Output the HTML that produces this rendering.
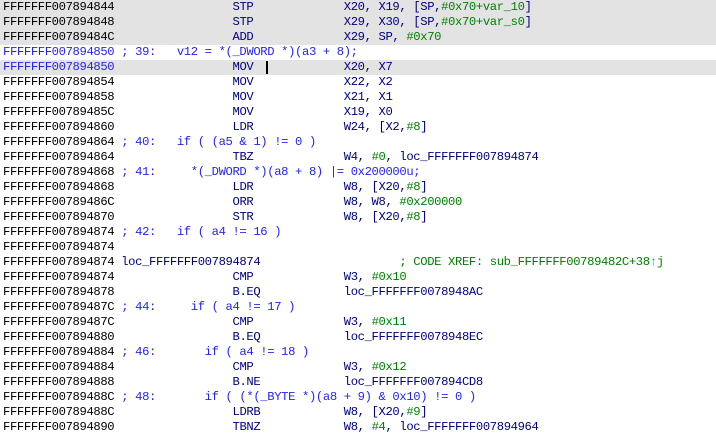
<!DOCTYPE html>
<html><head><meta charset="utf-8"><style>
html,body{margin:0;padding:0;background:#fff;width:716px;height:433px;overflow:hidden}
.v{position:relative;font-family:"Liberation Mono",monospace;font-size:12.2px;letter-spacing:-0.36px;color:#000}
.r{height:15px;line-height:15px;white-space:pre;padding-left:3px;position:relative}
.g{background:#e3e3e3}
.b{color:#2424f0}
.m{color:#000080}
.n{color:#008000}
.c{color:#008000}
.k{color:#1aa0c8}
.cur{position:absolute;left:266px;top:1px;width:2px;height:13px;background:#000}
</style></head><body><div class="v">
<div class="r g">FFFFFFF007894844                 <span class="m">STP             X20, X19, [SP,<span class="n">#0x70+var_10</span>]</span></div>
<div class="r g">FFFFFFF007894848                 <span class="m">STP             X29, X30, [SP,<span class="n">#0x70+var_s0</span>]</span></div>
<div class="r g">FFFFFFF00789484C                 <span class="m">ADD             X29, SP, <span class="n">#0x70</span></span></div>
<div class="r b">FFFFFFF007894850 ; 39:   v12 = *(_DWORD *)(a3 + 8);</div>
<div class="r g"><span class="b">FFFFFFF007894850</span>                 <span class="m">MOV             X20, X7</span><div class="cur"></div></div>
<div class="r">FFFFFFF007894854                 <span class="m">MOV             X22, X2</span></div>
<div class="r">FFFFFFF007894858                 <span class="m">MOV             X21, X1</span></div>
<div class="r">FFFFFFF00789485C                 <span class="m">MOV             X19, X0</span></div>
<div class="r">FFFFFFF007894860                 <span class="m">LDR             W24, [X2,<span class="n">#8</span>]</span></div>
<div class="r">FFFFFFF007894864 <span class="b">; 40:   if ( (a5 &amp; 1) != 0 )</span></div>
<div class="r">FFFFFFF007894864                 <span class="m">TBZ             W4, <span class="n">#0</span>, loc_FFFFFFF007894874</span></div>
<div class="r">FFFFFFF007894868 <span class="b">; 41:     *(_DWORD *)(a8 + 8) |= 0x200000u;</span></div>
<div class="r">FFFFFFF007894868                 <span class="m">LDR             W8, [X20,<span class="n">#8</span>]</span></div>
<div class="r">FFFFFFF00789486C                 <span class="m">ORR             W8, W8, <span class="n">#0x200000</span></span></div>
<div class="r">FFFFFFF007894870                 <span class="m">STR             W8, [X20,<span class="n">#8</span>]</span></div>
<div class="r">FFFFFFF007894874 <span class="b">; 42:   if ( a4 != 16 )</span></div>
<div class="r">FFFFFFF007894874</div>
<div class="r">FFFFFFF007894874 <span class="m">loc_FFFFFFF007894874</span>                    <span class="c">; CODE XREF: sub_FFFFFFF00789482C+38<span class="k">↑</span>j</span></div>
<div class="r">FFFFFFF007894874                 <span class="m">CMP             W3, <span class="n">#0x10</span></span></div>
<div class="r">FFFFFFF007894878                 <span class="m">B.EQ            loc_FFFFFFF0078948AC</span></div>
<div class="r">FFFFFFF00789487C <span class="b">; 44:     if ( a4 != 17 )</span></div>
<div class="r">FFFFFFF00789487C                 <span class="m">CMP             W3, <span class="n">#0x11</span></span></div>
<div class="r">FFFFFFF007894880                 <span class="m">B.EQ            loc_FFFFFFF0078948EC</span></div>
<div class="r">FFFFFFF007894884 <span class="b">; 46:       if ( a4 != 18 )</span></div>
<div class="r">FFFFFFF007894884                 <span class="m">CMP             W3, <span class="n">#0x12</span></span></div>
<div class="r">FFFFFFF007894888                 <span class="m">B.NE            loc_FFFFFFF007894CD8</span></div>
<div class="r">FFFFFFF00789488C <span class="b">; 48:       if ( (*(_BYTE *)(a8 + 9) &amp; 0x10) != 0 )</span></div>
<div class="r">FFFFFFF00789488C                 <span class="m">LDRB            W8, [X20,<span class="n">#9</span>]</span></div>
<div class="r">FFFFFFF007894890                 <span class="m">TBNZ            W8, <span class="n">#4</span>, loc_FFFFFFF007894964</span></div>
</div></body></html>
